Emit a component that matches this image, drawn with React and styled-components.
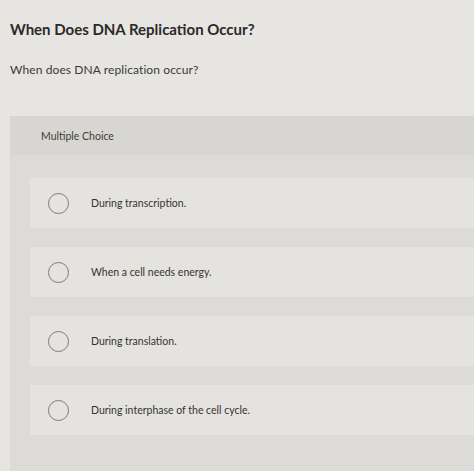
import React from "react";
import styled, { createGlobalStyle } from "styled-components";

const GlobalStyle = createGlobalStyle`
  html, body {
    margin: 0;
    padding: 0;
    background: #e7e5e1;
    font-family: Lato, "Open Sans", Arial, sans-serif;
  }
`;

const Page = styled.div`
  width: 474px;
  height: 471px;
  overflow: hidden;
  background: #e7e5e1;
  padding-left: 10px;
  box-sizing: border-box;
`;

const Title = styled.h1`
  margin: 0;
  padding-top: 19px;
  height: 38px;
  line-height: 20px;
  font-size: 15px;
  font-weight: 700;
  color: #2b2a29;
`;

const Question = styled.p`
  margin: 0;
  padding-top: 4px;
  height: 55px;
  line-height: 18px;
  font-size: 12px;
  letter-spacing: 0.1px;
  color: #3a3938;
`;

const Panel = styled.section`
  background: #dddbd7;
  min-height: 360px;
`;

const PanelHeader = styled.div`
  height: 39px;
  display: flex;
  align-items: center;
  padding-left: 31px;
  background: #d8d6d2;
  font-size: 10.5px;
  color: #3d3c3b;
`;

const Options = styled.div`
  display: flex;
  flex-direction: column;
  gap: 19px;
  padding: 23px 0 0 20px;
`;

const Option = styled.label`
  height: 50px;
  display: flex;
  align-items: center;
  padding-left: 18px;
  background: #e5e3df;
  font-size: 10.5px;
  color: #353433;
  cursor: pointer;
`;

const Radio = styled.span`
  width: 19px;
  height: 19px;
  border: 1.5px solid #7b7a78;
  border-radius: 50%;
  margin-right: 22px;
  flex-shrink: 0;
`;

const choices = [
  "During transcription.",
  "When a cell needs energy.",
  "During translation.",
  "During interphase of the cell cycle.",
];

export default function App() {
  return (
    <Page>
      <GlobalStyle />
      <Title>When Does DNA Replication Occur?</Title>
      <Question>When does DNA replication occur?</Question>
      <Panel>
        <PanelHeader>Multiple Choice</PanelHeader>
        <Options>
          {choices.map((c) => (
            <Option key={c}>
              <Radio />
              {c}
            </Option>
          ))}
        </Options>
      </Panel>
    </Page>
  );
}
